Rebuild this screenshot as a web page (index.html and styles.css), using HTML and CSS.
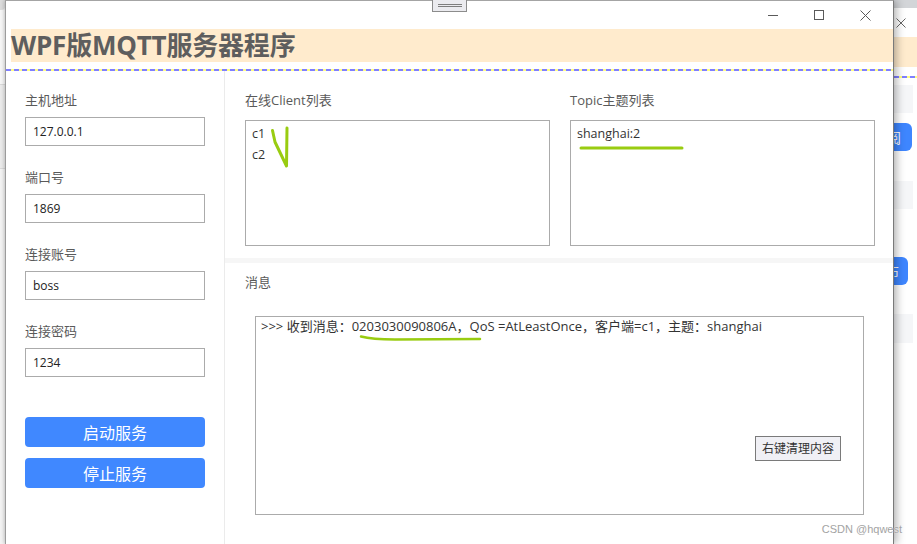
FILE: index.html
```html
<!DOCTYPE html>
<html lang="zh-CN">
<head>
<meta charset="utf-8">
<title>WPF版MQTT服务器程序</title>
<link rel="stylesheet" href="styles.css">
</head>
<body>
<div class="desk">
  <div class="strip">
    <div class="strip-top"></div>
    <div class="strip-a"></div>
    <div class="strip-b"></div>
    <div class="strip-c"></div>
  </div>

  <div class="window">
    <div class="grip"><span></span><span></span></div>
    <div class="titlebar">
      <div class="cap"><svg width="10" height="10" viewBox="0 0 10 10"><line x1="0" y1="5.5" x2="10" y2="5.5" stroke="#5a5a5a" stroke-width="1"/></svg></div>
      <div class="cap"><svg width="10" height="10" viewBox="0 0 10 10"><rect x="0.5" y="0.5" width="9" height="9" fill="none" stroke="#5a5a5a" stroke-width="1"/></svg></div>
      <div class="cap"><svg width="11" height="11" viewBox="0 0 11 11"><path d="M0.5 0.5 L10.5 10.5 M10.5 0.5 L0.5 10.5" stroke="#5a5a5a" stroke-width="1"/></svg></div>
    </div>
    <div class="header"><h1>WPF版MQTT服务器程序</h1></div>
    <div class="dash"></div>
    <div class="main">
      <aside class="side">
        <div class="field">
          <div class="label">主机地址</div>
          <div class="input">127.0.0.1</div>
        </div>
        <div class="field">
          <div class="label">端口号</div>
          <div class="input">1869</div>
        </div>
        <div class="field">
          <div class="label">连接账号</div>
          <div class="input">boss</div>
        </div>
        <div class="field">
          <div class="label">连接密码</div>
          <div class="input">1234</div>
        </div>
        <div class="btns">
          <div class="btn">启动服务</div>
          <div class="btn">停止服务</div>
        </div>
      </aside>
      <section class="content">
        <div class="lists">
          <div class="col">
            <div class="label">在线Client列表</div>
            <div class="listbox">
              <div class="item">c1</div>
              <div class="item">c2</div>
            </div>
          </div>
          <div class="col">
            <div class="label">Topic主题列表</div>
            <div class="listbox">
              <div class="item">shanghai:2</div>
            </div>
          </div>
        </div>
        <div class="band"></div>
        <div class="msg">
          <div class="label">消息</div>
          <div class="msgbox">
            <div class="line">&gt;&gt;&gt; 收到消息：0203030090806A，QoS =AtLeastOnce，客户端=c1，主题：shanghai</div>
            <div class="ctx">右键清理内容</div>
          </div>
        </div>
      </section>
    </div>
  </div>

  <div class="behind">
    <div class="b-top"></div>
    <div class="b-title"><svg width="10" height="10" viewBox="0 0 10 10"><path d="M0.5 0.5 L9.5 9.5 M9.5 0.5 L0.5 9.5" stroke="#666" stroke-width="1"/></svg></div>
    <div class="b-head"></div>
    <div class="b-dash"></div>
    <div class="b-input b-i1"></div>
    <div class="b-btn b-btn1"><span>订阅</span></div>
    <div class="b-input b-i2"></div>
    <div class="b-btn b-btn2"><span>发布</span></div>
    <div class="b-input b-i3"></div>
  </div>

  <svg class="marks" width="917" height="544" viewBox="0 0 917 544">
    <path d="M272.5 130.5 L275 142 L286.5 166 L287 128" fill="none" stroke="#99cc11" stroke-width="3" stroke-linecap="round" stroke-linejoin="round"/>
    <path d="M581 148 L682 148" fill="none" stroke="#99cc11" stroke-width="3" stroke-linecap="round"/>
    <path d="M361 336.5 Q372 339.5 395 339.5 L480 339" fill="none" stroke="#99cc11" stroke-width="2.5" stroke-linecap="round"/>
  </svg>

  <div class="watermark">CSDN @hqwest</div>
</div>
</body>
</html>
```

FILE: styles.css
```css
* { box-sizing: border-box; }

html, body {
  margin: 0;
  padding: 0;
  background: #fff;
}

body {
  font-family: "Open Sans", "Noto Sans CJK SC", sans-serif;
  overflow: hidden;
}

.desk {
  position: relative;
  display: flex;
  width: 917px;
  height: 544px;
  overflow: hidden;
}

/* left sliver of the page behind */
.strip {
  width: 5px;
  flex: none;
  display: flex;
  flex-direction: column;
  background: #f1f1f1;
}
.strip-top { height: 10px; background: #dcdcdc; border-bottom-right-radius: 4px; }
.strip-a { height: 75px; background: #f7f7f7; border-bottom: 1px solid #dadada; }
.strip-b { height: 84px; background: #ececec; border-bottom: 1px solid #dadada; }
.strip-c { flex: 1; background: #f4f4f4; }

/* main window */
.window {
  position: relative;
  z-index: 1;
  width: 889px;
  flex: none;
  display: flex;
  flex-direction: column;
  background: #fff;
  border-left: 1px solid #9c9c9c;
  border-top: 1px solid #a4a4a4;
  border-right: 1px solid #7a7a7a;
  box-shadow: 3px 0 8px rgba(0, 0, 0, 0.28), -1px 0 3px rgba(0, 0, 0, 0.12);
}

.grip {
  position: absolute;
  top: -1px;
  left: 426px;
  width: 35px;
  height: 12px;
  background: #ebebef;
  border: 1px solid #8c8c8c;
  border-top: none;
  display: flex;
  flex-direction: column;
  align-items: center;
  padding-top: 4px;
  gap: 1px;
}
.grip span {
  display: block;
  width: 24px;
  height: 1px;
  background: #7e7e7e;
}

.titlebar {
  height: 28px;
  display: flex;
  justify-content: flex-end;
  padding-right: 5px;
}
.cap {
  width: 46px;
  display: flex;
  align-items: center;
  justify-content: center;
}

.header {
  height: 33px;
  margin-left: 5px;
  background: #ffebcd;
  display: flex;
  align-items: center;
}
.header h1 {
  margin: 0;
  font-size: 26px;
  line-height: 33px;
  font-weight: 700;
  color: #5e5e5e;
  letter-spacing: -0.2px;
}

.dash {
  height: 2px;
  margin-top: 7px;
  background: repeating-linear-gradient(90deg, #7f7fff 0 5px, #ffff80 5px 8px);
}

.main {
  flex: 1;
  display: flex;
  min-height: 0;
}

.side {
  width: 219px;
  flex: none;
  border-right: 1px solid #ebebeb;
  padding: 20px 0 0 19px;
  display: flex;
  flex-direction: column;
}

.label {
  font-size: 13px;
  line-height: 18px;
  color: #5a5a5a;
}

.field .label { margin-bottom: 8px; }
.field + .field { margin-top: 22px; }

.input {
  width: 180px;
  height: 29px;
  border: 1px solid #ababab;
  padding-left: 7px;
  display: flex;
  align-items: center;
  font-size: 12px;
  color: #222;
}

.btns {
  margin-top: 40px;
  display: flex;
  flex-direction: column;
  gap: 11px;
}
.btn {
  width: 180px;
  height: 30px;
  border-radius: 4px;
  background: #4088ff;
  color: #fff;
  font-size: 16px;
  display: flex;
  align-items: center;
  justify-content: center;
}

.content {
  flex: 1;
  display: flex;
  flex-direction: column;
  min-width: 0;
}

.lists {
  display: flex;
  gap: 20px;
  padding: 20px 18px 12px 20px;
}
.col { width: 305px; }
.col .label { margin-bottom: 11px; }

.listbox {
  height: 126px;
  border: 1px solid #ababab;
  padding: 2px 6px;
}
.item {
  font-size: 12.5px;
  line-height: 21px;
  color: #333;
}

.band {
  height: 5px;
  background: #f6f6f6;
}

.msg {
  flex: 1;
  padding: 10px 29px 0 20px;
  display: flex;
  flex-direction: column;
}
.msg .label { margin-bottom: 25px; }

.msgbox {
  position: relative;
  margin-left: 10px;
  height: 199px;
  border: 1px solid #ababab;
  padding: 0 5px;
  font-size: 13px;
  line-height: 19px;
  color: #333;
}

.ctx {
  position: absolute;
  right: 22px;
  top: 119px;
  height: 25px;
  padding: 0 6px;
  border: 1px solid #7a7a7a;
  background: #f0f0f5;
  font-size: 12px;
  line-height: 23px;
  color: #333;
}

/* window behind, right side */
.behind {
  flex: 1;
  overflow: hidden;
  background: #fff;
  display: flex;
  flex-direction: column;
}
.b-top { height: 8px; background: #d3d5d8; }
.b-title {
  height: 29px;
  display: flex;
  align-items: center;
  padding-left: 2px;
}
.b-head { height: 30px; background: #ffebcd; }
.b-dash {
  height: 2px;
  margin-top: 9px;
  background: repeating-linear-gradient(90deg, #7f7fff 0 5px, #ffff80 5px 8px);
}
.b-input { width: 19px; background: #f5f6f8; }
.b-i1 { margin-top: 7px; height: 28px; }
.b-i2 { margin-top: 30px; height: 28px; }
.b-i3 { margin-top: 29px; height: 29px; }

.b-btn {
  height: 28px;
  background: #3e86ff;
  border-radius: 0 6px 6px 0;
  color: #fff;
  font-size: 14px;
  display: flex;
  align-items: center;
  justify-content: flex-end;
  white-space: nowrap;
}
.b-btn1 { margin-top: 10px; width: 18px; padding-right: 11px; }
.b-btn2 { margin-top: 48px; width: 14px; padding-right: 9px; }

.marks {
  position: absolute;
  left: 0;
  top: 0;
  z-index: 5;
  pointer-events: none;
}

.watermark {
  position: absolute;
  right: 15px;
  bottom: 8px;
  z-index: 6;
  font-family: "Liberation Sans", Arial, sans-serif;
  font-size: 11px;
  line-height: 13px;
  color: #a3a3a3;
  text-shadow: 0 0 1px #fff;
}
```
